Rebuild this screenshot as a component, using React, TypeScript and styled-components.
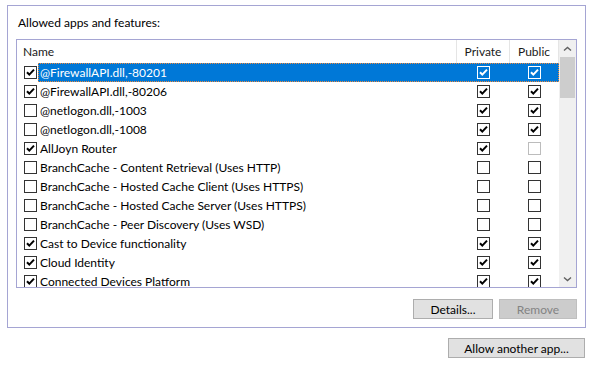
import React from 'react';
import styled, { createGlobalStyle } from 'styled-components';

const GlobalStyle = createGlobalStyle`
  body {
    margin: 0;
    background: #ffffff;
    font-family: Lato, 'Noto Sans', 'Liberation Sans', sans-serif;
    font-size: 12px;
    color: #000000;
  }
`;

const LINE = '#a5a5d3';

interface AppRow {
  name: string;
  enabled: boolean;
  priv: boolean;
  pub: boolean | 'disabled';
  selected?: boolean;
}

const rows: AppRow[] = [
  { name: '@FirewallAPI.dll,-80201', enabled: true, priv: true, pub: true, selected: true },
  { name: '@FirewallAPI.dll,-80206', enabled: true, priv: true, pub: true },
  { name: '@netlogon.dll,-1003', enabled: false, priv: true, pub: true },
  { name: '@netlogon.dll,-1008', enabled: false, priv: true, pub: true },
  { name: 'AllJoyn Router', enabled: true, priv: true, pub: 'disabled' },
  { name: 'BranchCache - Content Retrieval (Uses HTTP)', enabled: false, priv: false, pub: false },
  { name: 'BranchCache - Hosted Cache Client (Uses HTTPS)', enabled: false, priv: false, pub: false },
  { name: 'BranchCache - Hosted Cache Server (Uses HTTPS)', enabled: false, priv: false, pub: false },
  { name: 'BranchCache - Peer Discovery (Uses WSD)', enabled: false, priv: false, pub: false },
  { name: 'Cast to Device functionality', enabled: true, priv: true, pub: true },
  { name: 'Cloud Identity', enabled: true, priv: true, pub: true },
  { name: 'Connected Devices Platform', enabled: true, priv: true, pub: true },
];

const Page = styled.div`
  padding: 5px 8px 0 7px;
`;

const Group = styled.div`
  border: 1px solid ${LINE};
  padding: 9px 8px 8px 8px;
`;

const GroupLabel = styled.div`
  height: 16px;
  line-height: 16px;
  padding-left: 2px;
  margin-bottom: 8px;
`;

const ListBox = styled.div`
  border: 1px solid ${LINE};
  height: 247px;
  display: flex;
  overflow: hidden;
`;

const Table = styled.div`
  flex: 1;
  overflow: hidden;
`;

const HeaderRow = styled.div`
  display: flex;
  height: 23px;
`;

const HeaderCell = styled.div<{ $width?: number }>`
  ${({ $width }) => ($width ? `width: ${$width}px;` : 'flex: 1;')}
  display: flex;
  align-items: center;
  justify-content: ${({ $width }) => ($width ? 'center' : 'flex-start')};
  padding-left: ${({ $width }) => ($width ? 0 : 6)}px;
  border-right: 1px solid #e5e5e5;
  box-sizing: border-box;
  color: #1a1a1a;
`;

const Row = styled.div`
  display: flex;
  height: 19px;
`;

const CheckCell = styled.div`
  width: 21px;
  padding-left: 7px;
  box-sizing: border-box;
  display: flex;
  align-items: center;
`;

const RowBody = styled.div<{ $selected?: boolean }>`
  flex: 1;
  display: flex;
  align-items: center;
  background: ${({ $selected }) => ($selected ? '#0078d7' : 'transparent')};
  color: ${({ $selected }) => ($selected ? '#ffffff' : '#000000')};
  border: 1px dotted ${({ $selected }) => ($selected ? '#f08a3c' : 'transparent')};
  box-sizing: border-box;
`;

const NameText = styled.div`
  flex: 1;
  padding-left: 1px;
  white-space: nowrap;
  overflow: hidden;
`;

const ValueCell = styled.div<{ $width: number }>`
  width: ${({ $width }) => $width}px;
  display: flex;
  justify-content: center;
  align-items: center;
`;

const ScrollBar = styled.div`
  width: 17px;
  background: #f0f0f0;
  display: flex;
  flex-direction: column;
`;

const ArrowButton = styled.div`
  height: 17px;
  display: flex;
  align-items: center;
  justify-content: center;
`;

const Thumb = styled.div`
  height: 41px;
  margin: 0 1px;
  background: #cdcdcd;
`;

const Track = styled.div`
  flex: 1;
`;

const ButtonRow = styled.div`
  display: flex;
  justify-content: flex-end;
  gap: 6px;
  margin-top: 11px;
`;

const Button = styled.button<{ $width: number; $disabled?: boolean }>`
  width: ${({ $width }) => $width}px;
  height: 20px;
  padding: 0;
  font-family: inherit;
  font-size: 12px;
  background: ${({ $disabled }) => ($disabled ? '#cccccc' : '#e1e1e1')};
  border: 1px solid ${({ $disabled }) => ($disabled ? '#bfbfbf' : '#adadad')};
  color: ${({ $disabled }) => ($disabled ? '#838383' : '#000000')};
`;

const Footer = styled.div`
  display: flex;
  justify-content: flex-end;
  margin-top: 10px;
  padding-right: 1px;
`;

type BoxState = 'on' | 'off' | 'disabled';

const CheckBox: React.FC<{ state: BoxState; inverted?: boolean }> = ({ state, inverted }) => {
  const edge = state === 'disabled' ? '#bcbcbc' : inverted ? '#ffffff' : '#333333';
  const fill = inverted ? '#0078d7' : '#ffffff';
  const mark = inverted ? '#ffffff' : '#000000';
  return (
    <svg width="13" height="13" viewBox="0 0 13 13">
      <rect x="0.5" y="0.5" width="12" height="12" fill={fill} stroke={edge} />
      {state === 'on' && (
        <path d="M3 6.2 L5.3 8.6 L10 3.6" fill="none" stroke={mark} strokeWidth="2" />
      )}
    </svg>
  );
};

const Chevron: React.FC<{ down?: boolean }> = ({ down }) => (
  <svg width="9" height="6" viewBox="0 0 9 6">
    <path
      d={down ? 'M1 1.5 L4.5 4.5 L8 1.5' : 'M1 4.5 L4.5 1.5 L8 4.5'}
      fill="none"
      stroke="#606060"
      strokeWidth="1.4"
    />
  </svg>
);

const toState = (v: boolean | 'disabled'): BoxState =>
  v === 'disabled' ? 'disabled' : v ? 'on' : 'off';

const App: React.FC = () => {
  return (
    <>
      <GlobalStyle />
      <Page>
        <Group>
          <GroupLabel>Allowed apps and features:</GroupLabel>
          <ListBox>
            <Table>
              <HeaderRow>
                <HeaderCell>Name</HeaderCell>
                <HeaderCell $width={53}>Private</HeaderCell>
                <HeaderCell $width={49}>Public</HeaderCell>
              </HeaderRow>
              {rows.map((row) => (
                <Row key={row.name}>
                  <CheckCell>
                    <CheckBox state={row.enabled ? 'on' : 'off'} />
                  </CheckCell>
                  <RowBody $selected={row.selected}>
                    <NameText>{row.name}</NameText>
                    <ValueCell $width={53}>
                      <CheckBox state={toState(row.priv)} inverted={row.selected} />
                    </ValueCell>
                    <ValueCell $width={48}>
                      <CheckBox state={toState(row.pub)} inverted={row.selected} />
                    </ValueCell>
                  </RowBody>
                </Row>
              ))}
            </Table>
            <ScrollBar>
              <ArrowButton>
                <Chevron />
              </ArrowButton>
              <Thumb />
              <Track />
              <ArrowButton>
                <Chevron down />
              </ArrowButton>
            </ScrollBar>
          </ListBox>
          <ButtonRow>
            <Button $width={80}>Details...</Button>
            <Button $width={78} $disabled>
              Remove
            </Button>
          </ButtonRow>
        </Group>
        <Footer>
          <Button $width={137}>Allow another app...</Button>
        </Footer>
      </Page>
    </>
  );
};

export default App;
